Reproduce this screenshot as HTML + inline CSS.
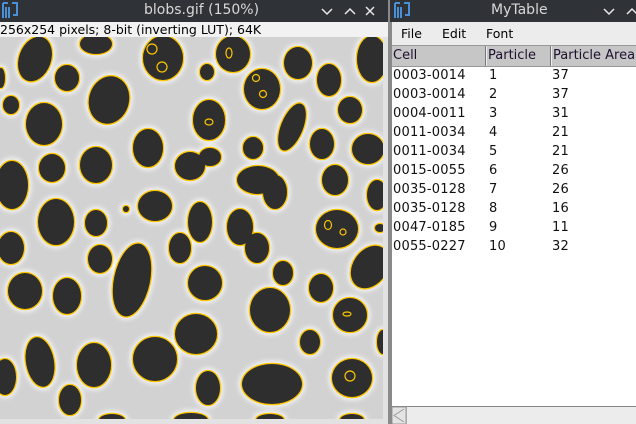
<!DOCTYPE html>
<html><head><meta charset="utf-8"><style>
*{margin:0;padding:0;box-sizing:border-box}
body{width:636px;height:424px;overflow:hidden;background:#e8e8e8;font-family:"DejaVu Sans","Liberation Sans",sans-serif;position:relative}
.tb{position:absolute;top:0;height:22px;background:#2f3237;color:#d8d8d8;font-size:14px}
.abs{position:absolute}
.row{position:absolute;left:393px;font-size:13px;color:#111;height:19px;line-height:19px;letter-spacing:0.2px}
.row span{position:absolute;white-space:nowrap}
</style></head><body>
<div class="tb" style="left:0;width:388px">
 <svg class="abs" style="left:2px;top:2px" width="16" height="18" viewBox="0 0 16 18"><path d="M1 1v15M1 1h5M4 5v11M7 5v11M10 1h5v12H11" stroke="#4a90d9" stroke-width="2" fill="none"/></svg>
 <div class="abs" style="left:144px;top:2px">blobs.gif (150%)</div>
 <svg class="abs" style="left:318px;top:5px" width="70" height="12" viewBox="0 0 70 12"><path d="M4 4l5 5 5-5M27 9l5-5 5 5M48 2l8 8M56 2l-8 8" stroke="#e8e8e8" stroke-width="1.5" fill="none"/></svg>
</div>
<div class="abs" style="left:0;top:22px;width:388px;height:15px;background:#f2f2f2;font-size:12.5px;color:#000;line-height:15px">256x254 pixels; 8-bit (inverting LUT); 64K</div>
<div class="abs" style="left:0;top:37px;width:388px;height:387px;background:#e2e2e2"></div>
<svg class="abs" style="left:0;top:37px" width="383" height="382" viewBox="0 37 383 382">
<defs><filter id="b"><feGaussianBlur stdDeviation="2"/></filter>
<g id="bl">
<ellipse cx="35" cy="59" rx="16" ry="23" transform="rotate(20 35 59)"/>
<ellipse cx="96" cy="44" rx="16" ry="10"/>
<ellipse cx="163" cy="58" rx="20" ry="22"/>
<ellipse cx="233" cy="54" rx="17" ry="18"/>
<ellipse cx="298" cy="63" rx="14" ry="16"/>
<ellipse cx="372" cy="59" rx="15" ry="23"/>
<ellipse cx="67" cy="78" rx="12" ry="13"/>
<ellipse cx="207" cy="72" rx="7" ry="8"/>
<ellipse cx="262" cy="89" rx="18" ry="20"/>
<ellipse cx="329" cy="80" rx="12" ry="16"/>
<ellipse cx="109" cy="100" rx="20" ry="24" transform="rotate(15 109 100)"/>
<ellipse cx="11" cy="105" rx="8" ry="9"/>
<ellipse cx="1" cy="78" rx="4" ry="10"/>
<ellipse cx="209" cy="120" rx="16" ry="20"/>
<ellipse cx="350" cy="110" rx="12" ry="13"/>
<ellipse cx="44" cy="124" rx="18" ry="21"/>
<ellipse cx="292" cy="127" rx="11" ry="25" transform="rotate(22 292 127)"/>
<ellipse cx="253" cy="148" rx="10" ry="11"/>
<ellipse cx="322" cy="144" rx="12" ry="15"/>
<ellipse cx="368" cy="149" rx="16" ry="15"/>
<ellipse cx="148" cy="148" rx="15" ry="19"/>
<ellipse cx="190" cy="166" rx="15" ry="14"/>
<ellipse cx="210" cy="157" rx="11" ry="9"/>
<ellipse cx="52" cy="168" rx="13" ry="14"/>
<ellipse cx="96" cy="165" rx="16" ry="18"/>
<ellipse cx="12" cy="185" rx="16" ry="24"/>
<ellipse cx="258" cy="180" rx="21" ry="14"/>
<ellipse cx="275" cy="192" rx="12" ry="17"/>
<ellipse cx="335" cy="180" rx="13" ry="15"/>
<ellipse cx="377" cy="195" rx="10" ry="15"/>
<ellipse cx="155" cy="206" rx="17" ry="15"/>
<ellipse cx="126" cy="209" rx="3" ry="3"/>
<ellipse cx="56" cy="222" rx="18" ry="23"/>
<ellipse cx="96" cy="223" rx="11" ry="13"/>
<ellipse cx="200" cy="222" rx="12" ry="20"/>
<ellipse cx="180" cy="248" rx="11" ry="15"/>
<ellipse cx="240" cy="227" rx="13" ry="18"/>
<ellipse cx="257" cy="248" rx="12" ry="15"/>
<ellipse cx="337" cy="229" rx="21" ry="19"/>
<ellipse cx="380" cy="228" rx="5" ry="4"/>
<ellipse cx="11" cy="248" rx="13" ry="16"/>
<ellipse cx="100" cy="259" rx="12" ry="14"/>
<ellipse cx="132" cy="280" rx="18" ry="37" transform="rotate(12 132 280)"/>
<ellipse cx="370" cy="267" rx="17" ry="23" transform="rotate(35 370 267)"/>
<ellipse cx="283" cy="273" rx="10" ry="12"/>
<ellipse cx="205" cy="283" rx="17" ry="17"/>
<ellipse cx="25" cy="291" rx="17" ry="18"/>
<ellipse cx="67" cy="296" rx="14" ry="18"/>
<ellipse cx="321" cy="288" rx="12" ry="14"/>
<ellipse cx="270" cy="310" rx="20" ry="22"/>
<ellipse cx="350" cy="315" rx="17" ry="17"/>
<ellipse cx="196" cy="334" rx="21" ry="20"/>
<ellipse cx="383" cy="342" rx="6" ry="12"/>
<ellipse cx="310" cy="342" rx="10" ry="12"/>
<ellipse cx="40" cy="362" rx="14" ry="25" transform="rotate(-10 40 362)"/>
<ellipse cx="94" cy="365" rx="17" ry="22"/>
<ellipse cx="155" cy="359" rx="22" ry="22"/>
<ellipse cx="5" cy="377" rx="11" ry="18"/>
<ellipse cx="272" cy="384" rx="30" ry="20"/>
<ellipse cx="352" cy="378" rx="20" ry="19"/>
<ellipse cx="208" cy="388" rx="12" ry="17"/>
<ellipse cx="70" cy="400" rx="11" ry="15"/>
<ellipse cx="112" cy="420" rx="13" ry="6"/>
<ellipse cx="191" cy="420" rx="17" ry="7"/>
<ellipse cx="270" cy="420" rx="14" ry="6"/>
<ellipse cx="352" cy="420" rx="12" ry="6"/>
</g></defs>
<rect x="0" y="37" width="383" height="382" fill="#d2d2d2"/>
<use href="#bl" fill="none" stroke="#f2f2f2" stroke-width="7" filter="url(#b)"/>
<use href="#bl" fill="none" stroke="#fdc600" stroke-width="2.6"/>
<use href="#bl" fill="#2e2e2e"/>
<g fill="none" stroke="#fdc600" stroke-width="1.2">
<circle cx="152" cy="49" r="5"/><circle cx="162" cy="67" r="5"/>
<ellipse cx="229" cy="53" rx="3" ry="5"/>
<circle cx="256" cy="78" r="3.5"/><circle cx="263" cy="94" r="3.5"/>
<ellipse cx="209" cy="122" rx="4" ry="3"/>
<ellipse cx="328" cy="225" rx="3.5" ry="4.5"/><circle cx="343" cy="232" r="3"/>
<ellipse cx="347" cy="314" rx="4" ry="2"/>
<circle cx="350" cy="376" r="5"/>
</g>
</svg>
<div class="abs" style="left:388px;top:0;width:4px;height:424px;background:#8a8a8a"></div>
<div class="tb" style="left:390px;width:246px">
 <svg class="abs" style="left:4px;top:2px" width="16" height="18" viewBox="0 0 16 18"><path d="M1 1v15M1 1h5M4 5v11M7 5v11M10 1h5v12H11" stroke="#4a90d9" stroke-width="2" fill="none"/></svg>
 <div class="abs" style="left:101px;top:2px">MyTable</div>
 <svg class="abs" style="left:210px;top:5px" width="36" height="12" viewBox="0 0 36 12"><path d="M4 4l5 5 5-5M27 9l5-5 5 5" stroke="#e8e8e8" stroke-width="1.5" fill="none"/></svg>
</div>
<div class="abs" style="left:392px;top:22px;width:244px;height:23px;background:#ececec;font-size:12.5px;color:#000;line-height:23px">
 <span class="abs" style="left:9px">File</span><span class="abs" style="left:50px">Edit</span><span class="abs" style="left:94px">Font</span>
</div>
<div class="abs" style="left:392px;top:45px;width:244px;height:362px;background:#fff"></div>
<div class="abs" style="left:392px;top:45px;width:244px;height:22px;background:#c6c6c6;border-top:1px solid #999;border-bottom:1px solid #999;font-size:13px;color:#201030;line-height:20px">
 <span class="abs" style="left:1px">Cell</span>
 <div class="abs" style="left:93px;top:0;width:2px;height:20px;background:#eee;border-left:1px solid #777"></div>
 <span class="abs" style="left:96px">Particle</span>
 <div class="abs" style="left:158px;top:0;width:2px;height:20px;background:#eee;border-left:1px solid #777"></div>
 <span class="abs" style="left:161px;white-space:nowrap">Particle Area</span>
</div>
<div class="row" style="top:66px"><span style="left:0">0003-0014</span><span style="left:96px">1</span><span style="left:159px">37</span></div>
<div class="row" style="top:85px"><span style="left:0">0003-0014</span><span style="left:96px">2</span><span style="left:159px">37</span></div>
<div class="row" style="top:104px"><span style="left:0">0004-0011</span><span style="left:96px">3</span><span style="left:159px">31</span></div>
<div class="row" style="top:123px"><span style="left:0">0011-0034</span><span style="left:96px">4</span><span style="left:159px">21</span></div>
<div class="row" style="top:142px"><span style="left:0">0011-0034</span><span style="left:96px">5</span><span style="left:159px">21</span></div>
<div class="row" style="top:161px"><span style="left:0">0015-0055</span><span style="left:96px">6</span><span style="left:159px">26</span></div>
<div class="row" style="top:180px"><span style="left:0">0035-0128</span><span style="left:96px">7</span><span style="left:159px">26</span></div>
<div class="row" style="top:199px"><span style="left:0">0035-0128</span><span style="left:96px">8</span><span style="left:159px">16</span></div>
<div class="row" style="top:218px"><span style="left:0">0047-0185</span><span style="left:96px">9</span><span style="left:159px">11</span></div>
<div class="row" style="top:237px"><span style="left:0">0055-0227</span><span style="left:96px">10</span><span style="left:159px">32</span></div>
<div class="abs" style="left:392px;top:406px;width:244px;height:18px;background:#ececec;border-top:1px solid #888"></div>
<svg class="abs" style="left:392px;top:407px" width="14" height="17" viewBox="0 0 14 17"><rect x="0" y="0" width="14" height="17" fill="#e4e4e4" stroke="#999"/><path d="M12 2L2 8.5 12 15" fill="none" stroke="#999"/></svg>
<div class="abs" style="left:406px;top:407px;width:1px;height:17px;background:#aaa"></div>
</body></html>
